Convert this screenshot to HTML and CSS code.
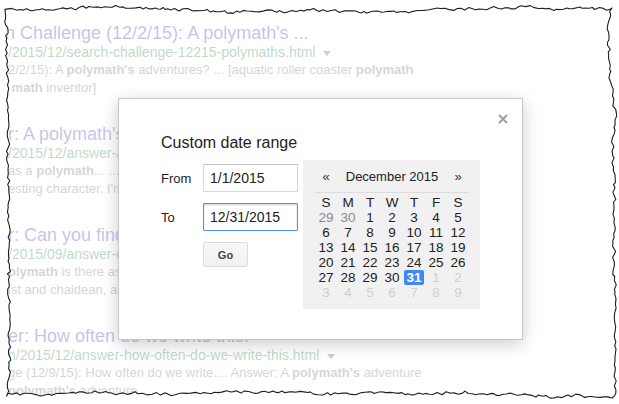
FILE: index.html
```html
<!DOCTYPE html>
<html>
<head>
<meta charset="utf-8">
<link rel="stylesheet" href="styles.css">
</head>
<body>
<div class="page">
  <div class="results">
    <div class="result">
      <div class="r-title r-first">h Challenge (12/2/15): A polymath's ...</div>
      <div class="r-url">/2015/12/search-challenge-12215-polymaths.html<span class="caret"></span></div>
      <div class="r-snip">2/2/15): A <b>polymath's</b> adventures? ... [aquatic roller coaster <b>polymath</b></div>
      <div class="r-snip"><b>&nbsp;math</b> inventor]</div>
    </div>
    <div class="result">
      <div class="r-title">r: A polymath's adventures</div>
      <div class="r-url">/2015/12/answer-a-polymaths-adventures.html<span class="caret"></span></div>
      <div class="r-snip">as a <b>polymath</b>... ... but he is a very</div>
      <div class="r-snip">esting character. I'm sure you found</div>
    </div>
    <div class="result">
      <div class="r-title">r: Can you find the polymath?</div>
      <div class="r-url">/2015/09/answer-can-you-find-polymath.html<span class="caret"></span></div>
      <div class="r-snip"><b>olymath</b> is there as well as the astronomer</div>
      <div class="r-snip">ist and chaldean, a mathematician</div>
    </div>
    <div class="result">
      <div class="r-title">er: How often do we write this.</div>
      <div class="r-url">h/2015/12/answer-how-often-do-we-write-this.html<span class="caret"></span></div>
      <div class="r-snip">ge (12/9/15): How often do we write.... Answer: A <b>polymath's</b> adventure</div>
      <div class="r-snip"><b>polymath's</b> adventure.</div>
    </div>
  </div>

  <div class="backdrop"></div>

  <div class="dialog">
    <svg class="close" width="10" height="10" viewBox="0 0 10 10"><path d="M1 1L9 9M9 1L1 9" stroke="#9a9a9a" stroke-width="1.8" fill="none"/></svg>
    <div class="d-title">Custom date range</div>
    <div class="d-body">
      <div class="d-form">
        <span class="label">From</span>
        <input class="input" type="text" value="1/1/2015">
        <span class="label">To</span>
        <input class="input focused" type="text" value="12/31/2015">
        <button class="go">Go</button>
      </div>
      <div class="calendar">
        <div class="cal-head">
          <span class="nav">«</span>
          <span class="month">December 2015</span>
          <span class="nav">»</span>
        </div>
        <div class="cal-grid">
          <span>S</span><span>M</span><span>T</span><span>W</span><span>T</span><span>F</span><span>S</span>
          <span class="other">29</span><span class="other">30</span><span>1</span><span>2</span><span>3</span><span>4</span><span>5</span>
          <span>6</span><span>7</span><span>8</span><span>9</span><span>10</span><span>11</span><span>12</span>
          <span>13</span><span>14</span><span>15</span><span>16</span><span>17</span><span>18</span><span>19</span>
          <span>20</span><span>21</span><span>22</span><span>23</span><span>24</span><span>25</span><span>26</span>
          <span>27</span><span>28</span><span>29</span><span>30</span><span class="sel">31</span><span class="off">1</span><span class="off">2</span>
          <span class="off">3</span><span class="off">4</span><span class="off">5</span><span class="off">6</span><span class="off">7</span><span class="off">8</span><span class="off">9</span>
        </div>
      </div>
    </div>
  </div>

  <svg class="torn" width="619" height="404" viewBox="0 0 619 404">
    <path id="tornMask" class="torn-mask" d=""/>
    <path id="tornLine" class="torn-line" d=""/>
  </svg>
</div>
<script src="script.js"></script>
</body>
</html>
```

FILE: styles.css
```css
body {
  margin: 0;
  background: #fff;
  font-family: "Liberation Sans", Arial, sans-serif;
}

.page {
  position: relative;
  width: 619px;
  height: 404px;
  overflow: hidden;
  background: #fff;
}

.results {
  padding: 23px 0 0 8px;
}

.result {
  margin-bottom: 27px;
}

.r-title {
  font-size: 18px;
  line-height: 20px;
  color: #1a0dab;
  white-space: nowrap;
}

.r-first {
  margin-left: -3px;
}

.r-url {
  font-size: 14px;
  line-height: 18px;
  color: #006621;
  white-space: nowrap;
}

.caret {
  display: inline-block;
  width: 0;
  height: 0;
  margin-left: 8px;
  vertical-align: middle;
  border-left: 4px solid transparent;
  border-right: 4px solid transparent;
  border-top: 5px solid #006621;
}

.r-snip {
  font-size: 13px;
  line-height: 18px;
  color: #545454;
  white-space: nowrap;
}

.r-snip b {
  color: #5a5a5a;
}

.backdrop {
  position: absolute;
  inset: 0;
  background: rgba(255, 255, 255, 0.75);
}

.dialog {
  position: absolute;
  left: 118px;
  top: 98px;
  width: 405px;
  height: 242px;
  box-sizing: border-box;
  background: #fff;
  border: 1px solid rgba(0, 0, 0, 0.22);
  box-shadow: 0 4px 16px rgba(0, 0, 0, 0.2);
  padding: 34px 0 0 42px;
  color: #222;
}

.close {
  position: absolute;
  left: 379px;
  top: 15px;
}

.d-title {
  font-size: 16px;
  line-height: 20px;
  color: #222;
}

.d-body {
  display: flex;
  align-items: flex-start;
  margin-top: 7px;
}

.d-form {
  display: grid;
  grid-template-columns: 42px 95px;
  grid-auto-rows: 28px;
  row-gap: 11px;
  align-items: center;
  margin-top: 4px;
}

.label {
  font-size: 13px;
  color: #222;
}

.input {
  box-sizing: border-box;
  width: 95px;
  height: 28px;
  margin: 0;
  padding: 0 6px;
  border: 1px solid #d9d9d9;
  border-top-color: #c0c0c0;
  border-radius: 1px;
  background: #fff;
  font-family: "Liberation Sans", Arial, sans-serif;
  font-size: 14px;
  color: #222;
  outline: none;
}

.input.focused {
  border-color: #4d90fe;
  box-shadow: inset 0 1px 2px rgba(0, 0, 0, 0.2);
}

.go {
  grid-column: 2;
  align-self: start;
  width: 45px;
  height: 25px;
  margin: 0;
  padding: 0;
  border: 1px solid #dcdcdc;
  border-radius: 2px;
  background: linear-gradient(#f8f8f8, #f1f1f1);
  font-family: "Liberation Sans", Arial, sans-serif;
  font-size: 11px;
  font-weight: bold;
  color: #444;
}

.calendar {
  box-sizing: border-box;
  width: 177px;
  height: 149px;
  margin-left: 5px;
  padding: 8px 11px 0 12px;
  background: #f1f1f1;
  font-size: 13.5px;
  color: #222;
}

.cal-head {
  display: grid;
  grid-template-columns: 22px 1fr 22px;
  height: 24px;
  line-height: 18px;
  border-bottom: 1px solid #dcdcdc;
  text-align: center;
  font-size: 13px;
}

.nav {
  color: #333;
}

.cal-grid {
  display: grid;
  grid-template-columns: repeat(7, 22px);
  grid-auto-rows: 15px;
  margin-top: 2px;
  line-height: 15px;
  text-align: center;
}

.cal-grid .other {
  color: #8a8a8a;
}

.cal-grid .off {
  color: #cfcfcf;
}

.cal-grid .sel {
  margin: 0 1px;
  border-radius: 2px;
  background: #4285f4;
  color: #fff;
  font-weight: bold;
}

.torn {
  position: absolute;
  left: 0;
  top: 0;
  pointer-events: none;
}

.torn-mask {
  fill: #fff;
  fill-rule: evenodd;
}

.torn-line {
  fill: none;
  stroke: #1e1e1e;
  stroke-width: 1.1;
  stroke-linejoin: round;
}
```

FILE: script.js
```js
(function () {
  var seed = 1234567;
  function rnd() {
    seed |= 0;
    seed = (seed + 0x6D2B79F5) | 0;
    var t = Math.imul(seed ^ (seed >>> 15), 1 | seed);
    t = (t + Math.imul(t ^ (t >>> 7), 61 | t)) ^ t;
    return ((t ^ (t >>> 14)) >>> 0) / 4294967296;
  }
  var pts = [];
  function edge(x0, y0, x1, y1, amp) {
    var dx = x1 - x0, dy = y1 - y0;
    var len = Math.sqrt(dx * dx + dy * dy);
    var ux = dx / len, uy = dy / len;
    var nx = -uy, ny = ux;
    var s = 0, w = 0;
    while (s < len) {
      w += (rnd() - 0.5) * 1.8;
      if (w > amp) w = amp;
      if (w < -amp) w = -amp;
      var j = (rnd() - 0.5) * 2.6;
      var d = w + j;
      pts.push([x0 + ux * s + nx * d, y0 + uy * s + ny * d]);
      s += 2 + rnd() * 3;
    }
  }
  edge(5, 10, 612, 8, 3.5);
  edge(612, 8, 612, 397, 3.5);
  edge(612, 397, 7, 396, 4.5);
  edge(7, 396, 5, 10, 2.8);
  var d = pts.map(function (p, i) {
    var x = Math.max(1, Math.min(617, p[0]));
    var y = Math.max(1, Math.min(402, p[1]));
    return (i ? "L" : "M") + x.toFixed(1) + " " + y.toFixed(1);
  }).join("") + "Z";
  document.getElementById("tornLine").setAttribute("d", d);
  document.getElementById("tornMask").setAttribute("d", "M0 0H619V404H0Z" + d);
})();
```
